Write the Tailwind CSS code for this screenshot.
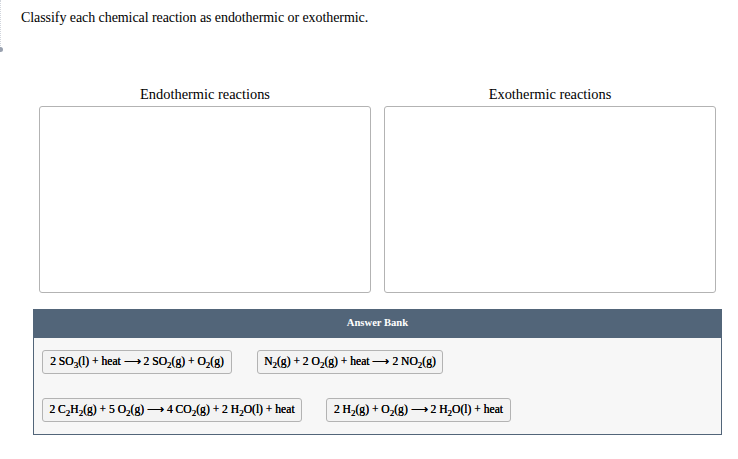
<!DOCTYPE html>
<html lang="en">
<head>
  <meta charset="UTF-8" />
  <title>Classify reactions</title>
  <script src="https://cdn.jsdelivr.net/npm/@tailwindcss/browser@4"></script>
</head>
<body class="bg-white font-['Liberation_Serif',serif] text-black w-[738px] h-[459px] overflow-hidden">
  <div class="flex h-[459px]">
    <div class="w-px shrink-0 flex flex-col items-start">
      <div class="h-[46px] border-l border-dotted border-gray-300"></div>
      <div class="w-[3px] h-[5px] mt-[1px] rounded-r-full bg-gray-400 shrink-0"></div>
    </div>
    <div class="flex-1 flex flex-col">
      <p class="text-[14px] leading-[18px] tracking-[-0.07px] pl-5 pt-[9px]">Classify each chemical reaction as endothermic or exothermic.</p>

      <div class="flex gap-[13px] pl-[38px] mt-[58px]">
        <div class="w-[332px]">
          <h2 class="text-[14.4px] leading-[18px] text-center mb-[3px]">Endothermic reactions</h2>
          <div class="h-[187px] bg-white border border-[#b3b3b3] rounded-[3px]"></div>
        </div>
        <div class="w-[332px]">
          <h2 class="text-[14.4px] leading-[18px] text-center mb-[3px]">Exothermic reactions</h2>
          <div class="h-[187px] bg-white border border-[#b3b3b3] rounded-[3px]"></div>
        </div>
      </div>

      <div class="ml-[32px] mt-4 w-[689px] h-[126px] border border-[#526579] bg-[#f7f7f7]">
        <div class="h-[28px] pb-[2px] bg-[#526579] text-white text-[10.6px] font-bold flex items-center justify-center">Answer Bank</div>
        <div class="flex flex-col gap-6 pl-2 pt-3">
          <div class="flex gap-[25px]">
            <div class="w-[190px] h-6 flex items-center justify-center bg-[#f3f3f3] border border-[#b3b3b3] rounded-[3px] text-[11.6px] [text-shadow:0_0_0.3px_black] whitespace-nowrap"><span>2 SO<sub class="text-[9px]">3</sub>(l) + heat ⟶ 2 SO<sub class="text-[9px]">2</sub>(g) + O<sub class="text-[9px]">2</sub>(g)</span></div>
            <div class="w-[186px] h-6 flex items-center justify-center bg-[#f3f3f3] border border-[#b3b3b3] rounded-[3px] text-[11.6px] [text-shadow:0_0_0.3px_black] whitespace-nowrap"><span>N<sub class="text-[9px]">2</sub>(g) + 2 O<sub class="text-[9px]">2</sub>(g) + heat ⟶ 2 NO<sub class="text-[9px]">2</sub>(g)</span></div>
          </div>
          <div class="flex gap-6">
            <div class="w-[260px] h-6 flex items-center justify-center bg-[#f3f3f3] border border-[#b3b3b3] rounded-[3px] text-[11.6px] [text-shadow:0_0_0.3px_black] whitespace-nowrap"><span>2 C<sub class="text-[9px]">2</sub>H<sub class="text-[9px]">2</sub>(g) + 5 O<sub class="text-[9px]">2</sub>(g) ⟶ 4 CO<sub class="text-[9px]">2</sub>(g) + 2 H<sub class="text-[9px]">2</sub>O(l) + heat</span></div>
            <div class="w-[185px] h-6 flex items-center justify-center bg-[#f3f3f3] border border-[#b3b3b3] rounded-[3px] text-[11.6px] [text-shadow:0_0_0.3px_black] whitespace-nowrap"><span>2 H<sub class="text-[9px]">2</sub>(g) + O<sub class="text-[9px]">2</sub>(g) ⟶ 2 H<sub class="text-[9px]">2</sub>O(l) + heat</span></div>
          </div>
        </div>
      </div>
    </div>
  </div>
</body>
</html>
